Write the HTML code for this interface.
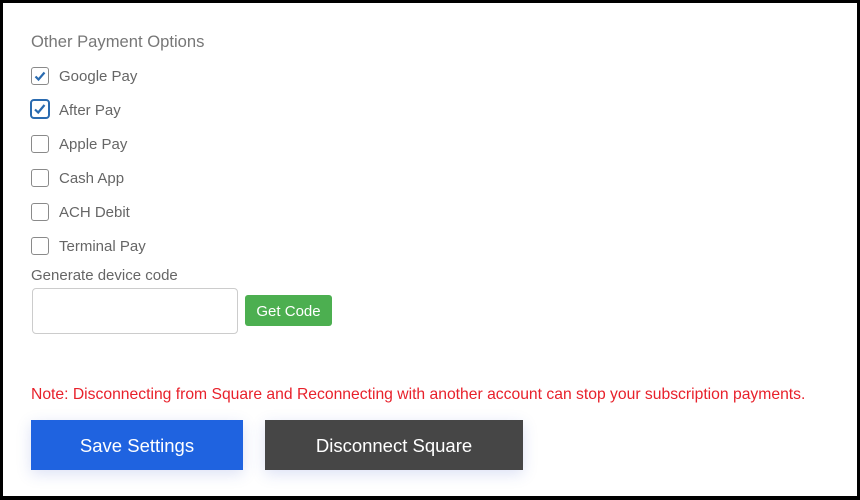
<!DOCTYPE html>
<html><head><meta charset="utf-8"><style>
*{box-sizing:border-box;margin:0;padding:0}
html,body{width:860px;height:500px;background:#000;overflow:hidden;font-family:"Liberation Sans",sans-serif}
.frame{position:absolute;left:3px;top:3px;width:854px;height:493px;background:#fff}
.abs{position:absolute;white-space:nowrap}
.h{left:31px;top:32px;font-size:16.6px;color:#777}
.lbl{left:59px;font-size:15px;color:#666}
.cb{position:absolute;left:31px;width:18px;height:18px;border:1.5px solid #8a8a8a;border-radius:3px;background:#fff}
.cb.on2{left:30px;width:20px;height:20px;border:2.5px solid #2a6bb0;border-radius:4px}
.cb svg{position:absolute;left:1px;top:1px}
.gen{left:31px;top:267px;font-size:15px;color:#666}
.inp{position:absolute;left:32px;top:288px;width:206px;height:46px;border:1px solid #ccc;border-radius:4px}
.gc{position:absolute;left:245px;top:295px;width:87px;height:31px;background:#4caf50;border-radius:3px;color:#fff;font-size:15px;text-align:center;line-height:33px}
.note{left:31px;top:386px;font-size:15.7px;color:#e8212b}
.btn{position:absolute;top:420px;height:50px;color:#fff;font-size:18.5px;text-align:center;line-height:52px;box-shadow:0 4px 14px rgba(60,90,200,.18)}
</style></head><body>
<div class="frame"></div>
<div class="abs h">Other Payment Options</div>

<div class="cb" style="top:67px"><svg width="14" height="14" viewBox="0 0 14 14"><path d="M2.5 7.5 L5.5 10.5 L11.5 3.5" fill="none" stroke="#2a6bb0" stroke-width="2.2"/></svg></div>
<div class="abs lbl" style="top:68px">Google Pay</div>

<div class="cb on2" style="top:99px"><svg width="14" height="14" viewBox="0 0 14 14"><path d="M2 7.5 L5.2 10.5 L11.5 3" fill="none" stroke="#2a6bb0" stroke-width="2.2"/></svg></div>
<div class="abs lbl" style="top:102px">After Pay</div>

<div class="cb" style="top:135px"></div>
<div class="abs lbl" style="top:136px">Apple Pay</div>
<div class="cb" style="top:169px"></div>
<div class="abs lbl" style="top:170px">Cash App</div>
<div class="cb" style="top:203px"></div>
<div class="abs lbl" style="top:204px">ACH Debit</div>
<div class="cb" style="top:237px"></div>
<div class="abs lbl" style="top:238px">Terminal Pay</div>

<div class="abs gen">Generate device code</div>
<div class="inp"></div>
<div class="gc">Get Code</div>

<div class="abs note">Note: Disconnecting from Square and Reconnecting with another account can stop your subscription payments.</div>

<div class="btn" style="left:31px;width:212px;background:#1f63e0">Save Settings</div>
<div class="btn" style="left:265px;width:258px;background:#464646">Disconnect Square</div>
</body></html>
